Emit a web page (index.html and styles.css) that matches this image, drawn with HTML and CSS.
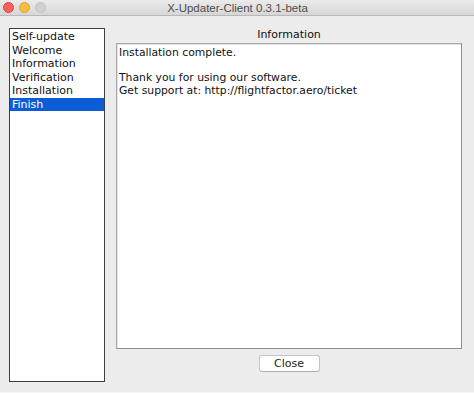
FILE: index.html
```html
<!DOCTYPE html>
<html>
<head>
	<title>X-Updater-Client 0.3.1-beta</title>
	<meta http-equiv="content-type" content="text/html;charset=utf-8" />
	<link rel="stylesheet" href="styles.css">
</head>
<body>
	<div class="window">
		<div class="titlebar">
			<div class="lights">
				<span class="light close"></span>
				<span class="light min"></span>
				<span class="light max"></span>
			</div>
			<div class="title">X-Updater-Client 0.3.1-beta</div>
		</div>
		<div class="main">
			<ul class="steps">
				<li>Self-update</li>
				<li>Welcome</li>
				<li>Information</li>
				<li>Verification</li>
				<li>Installation</li>
				<li class="sel">Finish</li>
			</ul>
			<div class="panel">
				<div class="label">Information</div>
				<div class="text">
					<p>Installation complete.</p>
					<p>&nbsp;</p>
					<p>Thank you for using our software.</p>
					<p>Get support at: http://flightfactor.aero/ticket</p>
				</div>
				<div class="buttons">
					<button class="btn">Close</button>
				</div>
			</div>
		</div>
	</div>
</body>
</html>
```

FILE: styles.css
```css
*{padding:0;margin:0;box-sizing:border-box;}
body{width:474px;height:393px;background:#ececec;font-family:"DejaVu Sans", "Liberation Sans", sans-serif;font-size:11px;color:#111;overflow:hidden;}

.window{height:393px;display:flex;flex-direction:column;border-bottom:1px solid #f6f6f6;}
.titlebar{height:16px;flex:none;position:relative;background:linear-gradient(#ebebeb, #d6d6d6);border-bottom:1px solid #b8b8b8;display:flex;align-items:center;justify-content:center;}
.lights{position:absolute;left:3px;top:2px;display:flex;gap:5px;}
.light{width:11px;height:11px;border-radius:50%;display:block;}
.light.close{background:#fc605c;border:1px solid #e0443e;}
.light.min{background:#fdbc40;border:1px solid #dea236;}
.light.max{background:#d0d0d0;border:1px solid #c2c2c2;}
.title{font-family:"Liberation Sans", Arial, sans-serif;font-size:11.5px;color:#4d4d4d;padding-left:1px;}

.main{flex:1;display:flex;padding:12px 12px 10px 9px;gap:11px;}
.steps{list-style:none;width:96px;height:354px;background:#fff;border:1px solid #3e3e3e;padding-top:1px;}
.steps li{height:13.5px;line-height:13.5px;padding-left:2px;white-space:nowrap;}
.steps li.sel{background:#0c5bd7;color:#fff;}

.panel{flex:1;display:flex;flex-direction:column;}
.label{height:15px;line-height:14px;text-align:center;}
.text{height:306px;background:#fff;border:1px solid #a9a9a9;border-right-color:#8e8e8e;border-bottom-color:#8e8e8e;box-shadow:inset 1px 1px 0 #e2e2e2;padding:3px 2px;font-size:10.8px;}
.text p{height:12.5px;line-height:12.5px;white-space:nowrap;}
.buttons{display:flex;justify-content:center;padding-top:6px;}
.btn{width:61px;height:17px;font-family:inherit;font-size:11px;color:#222;background:#fff;border:1px solid #c4c4c4;border-bottom-color:#b0b0b0;border-radius:3px;}
```
